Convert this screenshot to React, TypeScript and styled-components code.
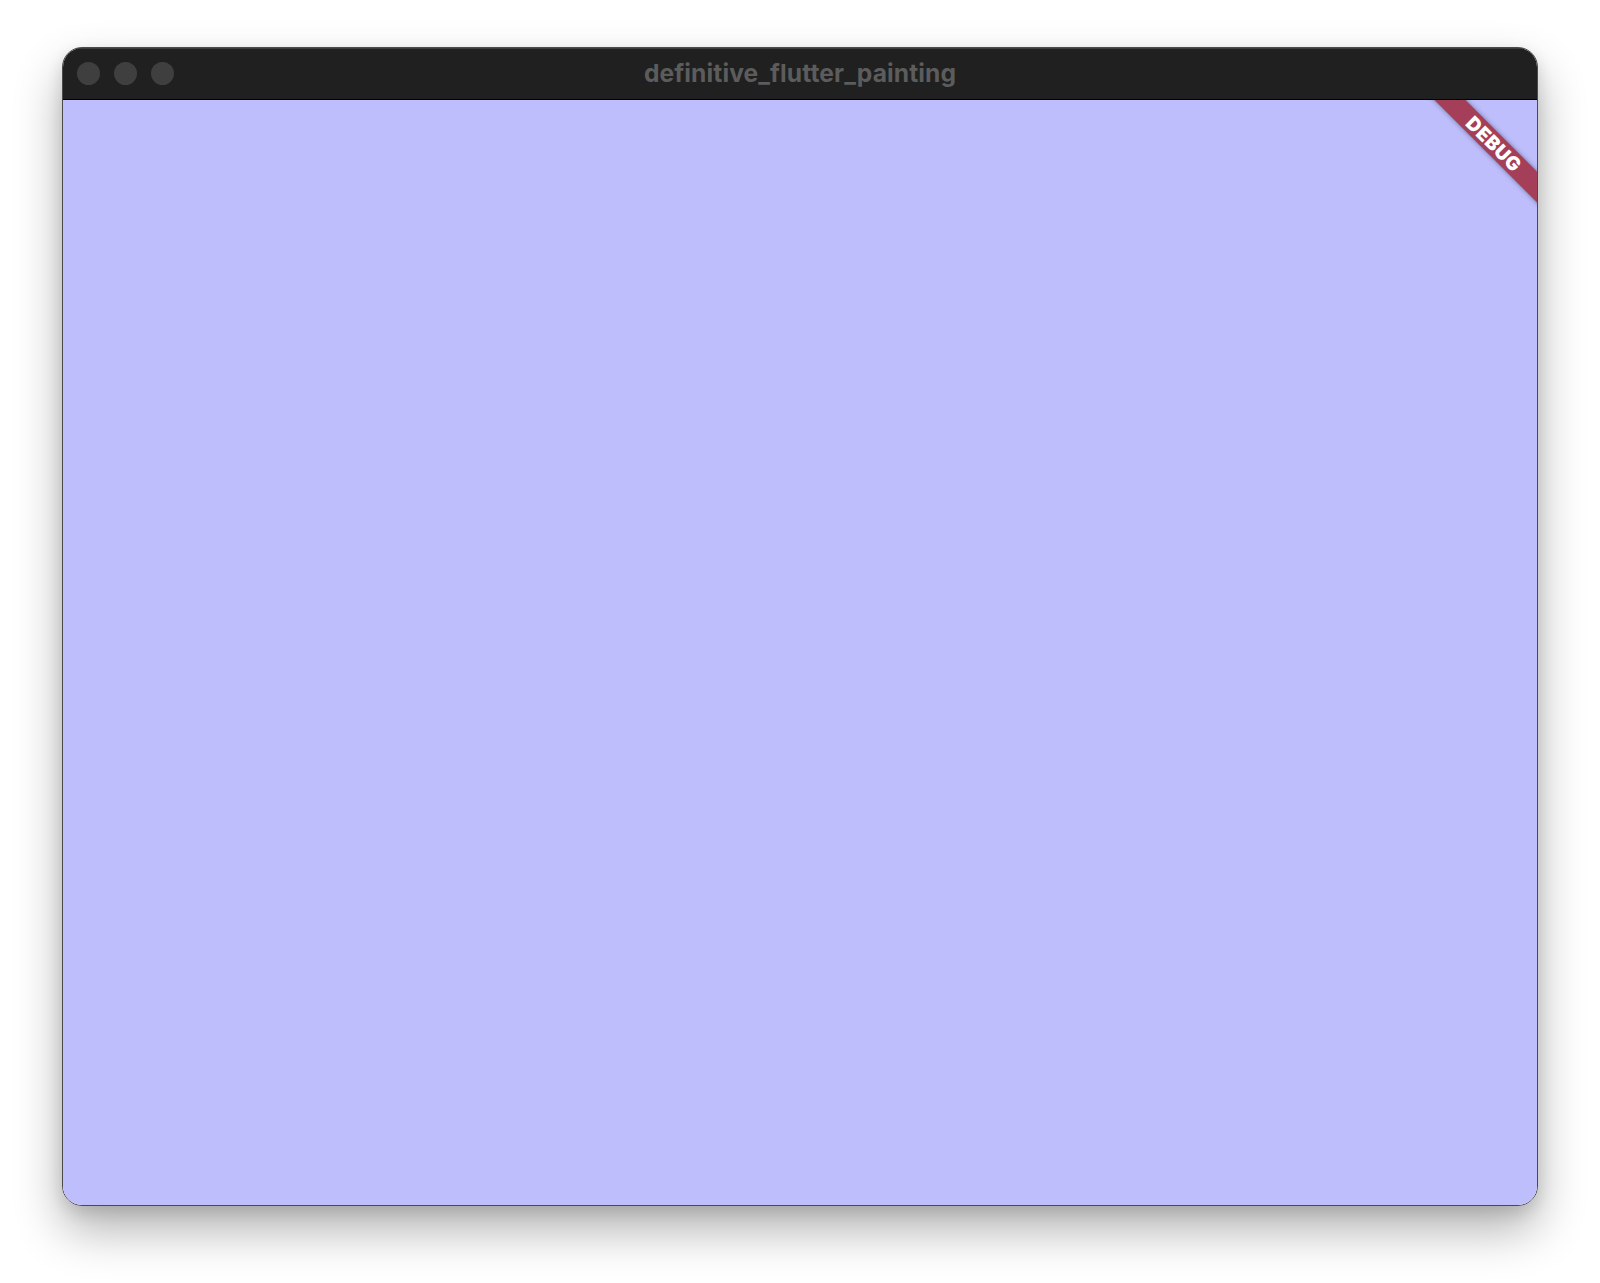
import { FunctionComponent } from 'react';
import { createGlobalStyle, styled } from 'styled-components';

const GlobalStyle = createGlobalStyle`
  html, body {
    margin: 0;
    padding: 0;
    background: #ffffff;
  }
  body {
    font-family: Inter, "Noto Sans", "Liberation Sans", sans-serif;
  }
`;

const TRAFFIC_LIGHTS = ['close', 'minimize', 'zoom'];

const App: FunctionComponent = () => {
  return (
    <>
      <GlobalStyle />
      <Page>
        <Window>
          <TitleBar>
            <Lights>
              {TRAFFIC_LIGHTS.map((name) => (
                <Light key={name} aria-label={name} />
              ))}
            </Lights>
            <Title>definitive_flutter_painting</Title>
          </TitleBar>
          <Content>
            <BannerClip>
              <Banner>DEBUG</Banner>
            </BannerClip>
          </Content>
        </Window>
      </Page>
    </>
  );
};

const Page = styled.div`
  box-sizing: border-box;
  width: 1600px;
  height: 1283px;
  padding: 47px 62px 77px 62px;
  background: #ffffff;
`;
const Window = styled.div`
  box-sizing: border-box;
  width: 1476px;
  height: 1159px;
  display: flex;
  flex-direction: column;
  border-radius: 20px;
  overflow: hidden;
  border: 1px solid #4a4a4a;
  box-shadow:
    0 24px 48px rgba(0, 0, 0, 0.3),
    0 6px 16px rgba(0, 0, 0, 0.12);
`;
const TitleBar = styled.div`
  position: relative;
  flex: 0 0 51px;
  display: flex;
  align-items: center;
  justify-content: center;
  background: #202020;
  border-bottom: 1px solid #000000;
  box-shadow: inset 0 1px 0 #3c3c3c;
`;
const Lights = styled.div`
  position: absolute;
  left: 14px;
  top: 14px;
  display: flex;
  gap: 14px;
`;
const Light = styled.span`
  width: 23px;
  height: 23px;
  border-radius: 50%;
  background: #3f3f3f;
`;
const Title = styled.div`
  margin-top: -2px;
  font-size: 24.6px;
  font-weight: 700;
  color: #5c5c5c;
  letter-spacing: 0.1px;
`;
const Content = styled.div`
  position: relative;
  flex: 1;
  background: #bebefd;
`;
const BannerClip = styled.div`
  position: absolute;
  top: 0;
  right: 0;
  width: 160px;
  height: 160px;
  overflow: hidden;
`;
const Banner = styled.div`
  position: absolute;
  left: 116.5px;
  top: 43.5px;
  width: 300px;
  height: 22px;
  margin-left: -150px;
  margin-top: -11px;
  transform: rotate(45deg);
  display: flex;
  align-items: center;
  justify-content: center;
  background: rgba(158, 26, 42, 0.78);
  box-shadow: 0 0 5px rgba(0, 0, 0, 0.4);
  color: #ffffff;
  font-family: Inter, "Liberation Sans", sans-serif;
  font-size: 19px;
  font-weight: 900;
  letter-spacing: 0.6px;
  line-height: 1;
`;

export default App;
